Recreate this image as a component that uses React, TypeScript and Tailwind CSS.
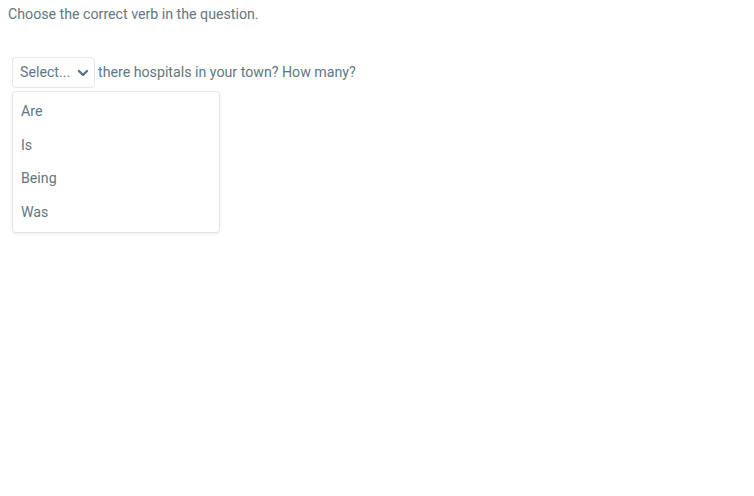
import React from "react";

export default function App() {
  const font = { fontFamily: "Roboto, 'Noto Sans', sans-serif" };
  return (
    <div className="w-[754px] h-[496px] bg-white text-[#627782]" style={font}>
      <div className="pl-[8px] pt-[5px] text-[14.2px] leading-[18px]">Choose the correct verb in the question.</div>
      <div className="pl-[12px] pt-[34px] flex items-center gap-[3px] text-[14.2px] leading-[18px]">
        <div className="relative">
          <div className="h-[31px] w-[83px] border border-[#e3e6e8] rounded-[4px] flex items-center pl-[7px] pr-[4px] pb-[2px] justify-between">
            <span>Select...</span>
            <svg width="12" height="10" viewBox="0 0 12 10" className="mr-[1px] mt-[2px]">
              <path d="M2 3 L6 7 L10 3" stroke="#5e727d" strokeWidth="2.4" fill="none" strokeLinecap="round" strokeLinejoin="round" />
            </svg>
          </div>
          <div className="absolute left-0 top-[34px] w-[208px] bg-white border border-[#e3e6e8] rounded-[4px] shadow-[0_1px_3px_rgba(0,0,0,0.08)] pt-[2px] pb-[3px] z-10">
            {["Are", "Is", "Being", "Was"].map((o) => (
              <div key={o} className="h-[33.7px] flex items-center pl-[8px]">{o}</div>
            ))}
          </div>
        </div>
        <span className="pb-[2px]">there hospitals in your town? How many?</span>
      </div>
    </div>
  );
}
